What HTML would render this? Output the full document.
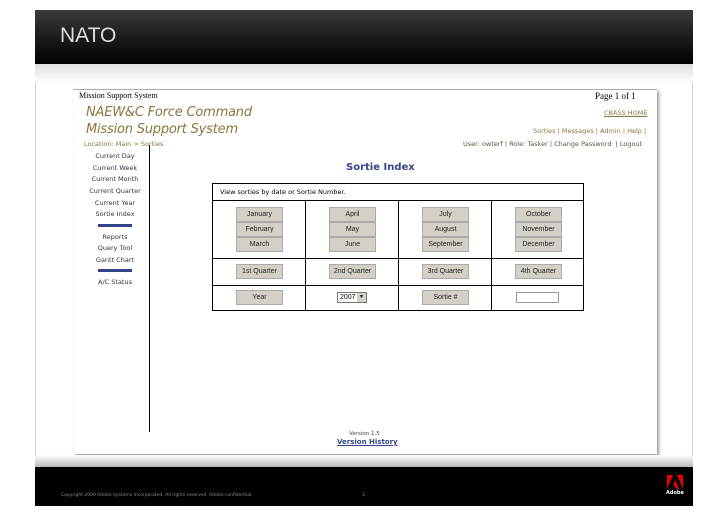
<!DOCTYPE html><html><head><style>
*{margin:0;padding:0;box-sizing:border-box}
body{width:728px;height:514px;background:#fff;position:relative;overflow:hidden;font-family:"DejaVu Sans",Verdana,sans-serif}
.a{position:absolute}
.frame{left:35px;top:10px;width:658px;height:496px;background:#fff;border:1px solid #ccc}
.hdr{left:35px;top:10px;width:658px;height:54px;background:linear-gradient(#3a3a3a,#000);}
.hdr span{position:absolute;left:25px;top:14px;color:#ddd;font:21px "Liberation Sans",sans-serif}
.g1{left:35px;top:64px;width:658px;height:18px;background:linear-gradient(#ddd,#fff)}
.shot{left:73px;top:89px;width:584px;height:365px;background:#fff;border-top:1px solid #aaa;box-shadow:2px 2px 3px #999}
.g2{left:35px;top:455px;width:658px;height:12px;background:linear-gradient(#fff,#bbb)}
.ftr{left:35px;top:467px;width:658px;height:39px;background:#000}
.tx{font-size:8px;white-space:nowrap}
.side{font-size:6.5px;color:#334;text-align:center;width:80px;left:75px}
.bar{left:98px;width:34px;height:3px;background:#334488}
.btn{position:absolute;background:#d4d0c8;border:1px solid #aaa;font:7px "Liberation Sans",sans-serif;color:#222;text-align:center;line-height:13px;height:15px}
td{border:1px solid #000}
</style></head><body>
<div class="a frame"></div>
<div class="a hdr"><span>NATO</span></div>
<div class="a g1"></div>
<div class="a shot"></div>
<div class="a g2"></div>
<div class="a ftr"></div>
<div class="a tx" style="left:79px;top:91px;font:8px 'Liberation Serif',serif">Mission Support System</div>
<div class="a tx" style="left:595px;top:91px;font:9px 'Liberation Serif',serif">Page 1 of 1</div>
<div class="a tx" style="left:86px;top:105px;font:italic 13px 'DejaVu Sans',sans-serif;color:#8a7640;letter-spacing:-0.2px">NAEW&amp;C Force Command</div>
<div class="a tx" style="left:86px;top:122px;font:italic 13px 'DejaVu Sans',sans-serif;color:#8a7640;letter-spacing:-0.2px">Mission Support System</div>
<div class="a tx" style="left:84px;top:140px;font-size:6.5px;color:#8a7640">Location: Main &gt; Sorties</div>
<div class="a tx" style="left:604px;top:109px;font-size:6.5px;color:#8a7640;text-decoration:underline">CBASS HOME</div>
<div class="a tx" style="left:533px;top:127px;font-size:6.5px;color:#8a7640">Sorties | Messages | Admin | Help |</div>
<div class="a tx" style="left:463px;top:140px;font-size:6.5px;color:#554">User: owterf | Role: Tasker | Change Password &nbsp;| Logout</div>
<div class="a tx" style="left:346px;top:162px;font-size:10px;font-weight:bold;color:#334488">Sortie Index</div>
<div class="a side" style="top:152px">Current Day</div>
<div class="a side" style="top:164px">Current Week</div>
<div class="a side" style="top:175px">Current Month</div>
<div class="a side" style="top:187px">Current Quarter</div>
<div class="a side" style="top:199px">Current Year</div>
<div class="a side" style="top:210px">Sortie Index</div>
<div class="a bar" style="top:224px"></div>
<div class="a side" style="top:233px">Reports</div>
<div class="a side" style="top:244px">Query Tool</div>
<div class="a side" style="top:256px">Gantt Chart</div>
<div class="a bar" style="top:269px"></div>
<div class="a side" style="top:278px">A/C Status</div>
<div class="a" style="left:149px;top:145px;width:1px;height:287px;background:#000"></div>
<table class="a" style="left:212px;top:183px;width:372px;height:128px;border-collapse:collapse">
<tr style="height:17px"><td colspan="4" style="font-size:6.5px;padding-left:7px">View sorties by date or Sortie Number.</td></tr>
<tr style="height:58px"><td style="width:93px"></td><td style="width:93px"></td><td style="width:93px"></td><td></td></tr>
<tr style="height:27px"><td></td><td></td><td></td><td></td></tr>
<tr><td></td><td></td><td></td><td></td></tr></table>
<div class="btn" style="left:236px;top:207px;width:47px">January</div>
<div class="btn" style="left:236px;top:222px;width:47px">February</div>
<div class="btn" style="left:236px;top:237px;width:47px">March</div>
<div class="btn" style="left:329px;top:207px;width:47px">April</div>
<div class="btn" style="left:329px;top:222px;width:47px">May</div>
<div class="btn" style="left:329px;top:237px;width:47px">June</div>
<div class="btn" style="left:422px;top:207px;width:47px">July</div>
<div class="btn" style="left:422px;top:222px;width:47px">August</div>
<div class="btn" style="left:422px;top:237px;width:47px">September</div>
<div class="btn" style="left:515px;top:207px;width:47px">October</div>
<div class="btn" style="left:515px;top:222px;width:47px">November</div>
<div class="btn" style="left:515px;top:237px;width:47px">December</div>
<div class="btn" style="left:236px;top:264px;width:47px">1st Quarter</div>
<div class="btn" style="left:329px;top:264px;width:47px">2nd Quarter</div>
<div class="btn" style="left:422px;top:264px;width:47px">3rd Quarter</div>
<div class="btn" style="left:515px;top:264px;width:47px">4th Quarter</div>
<div class="btn" style="left:236px;top:290px;width:47px">Year</div>
<div class="btn" style="left:422px;top:290px;width:47px">Sortie #</div>
<div class="a" style="left:337px;top:292px;width:30px;height:11px;border:1px solid #777;background:#fff;font:7px 'Liberation Sans',sans-serif;padding-left:2px;line-height:9px">2007<span style="position:absolute;right:0;top:0;width:9px;height:9px;background:#d4d0c8;font-size:5px;text-align:center">▼</span></div>
<div class="a" style="left:516px;top:292px;width:43px;height:11px;border:1px solid #999;background:#fff"></div>
<div class="a tx" style="left:349px;top:431px;font-size:5.5px;color:#444">Version 1.5</div>
<div class="a tx" style="left:337px;top:438px;font-size:7px;font-weight:bold;color:#334488;text-decoration:underline">Version History</div>
<div class="a tx" style="left:61px;top:493px;font-size:4.5px;color:#888">Copyright 2009 Adobe Systems Incorporated. All rights reserved. Adobe confidential.</div>
<div class="a tx" style="left:362px;top:493px;font-size:4.5px;color:#888">3</div>
<svg class="a" style="left:667px;top:475px" width="16" height="14" viewBox="0 0 16 14"><path d="M0 0h6L0 14z M10 0h6v14z M8 5l4 9h-3l-1-3h-2z" fill="#e00"/></svg>
<div class="a tx" style="left:666px;top:490px;font-size:5px;color:#fff;font-weight:bold">Adobe</div>
</body></html>
